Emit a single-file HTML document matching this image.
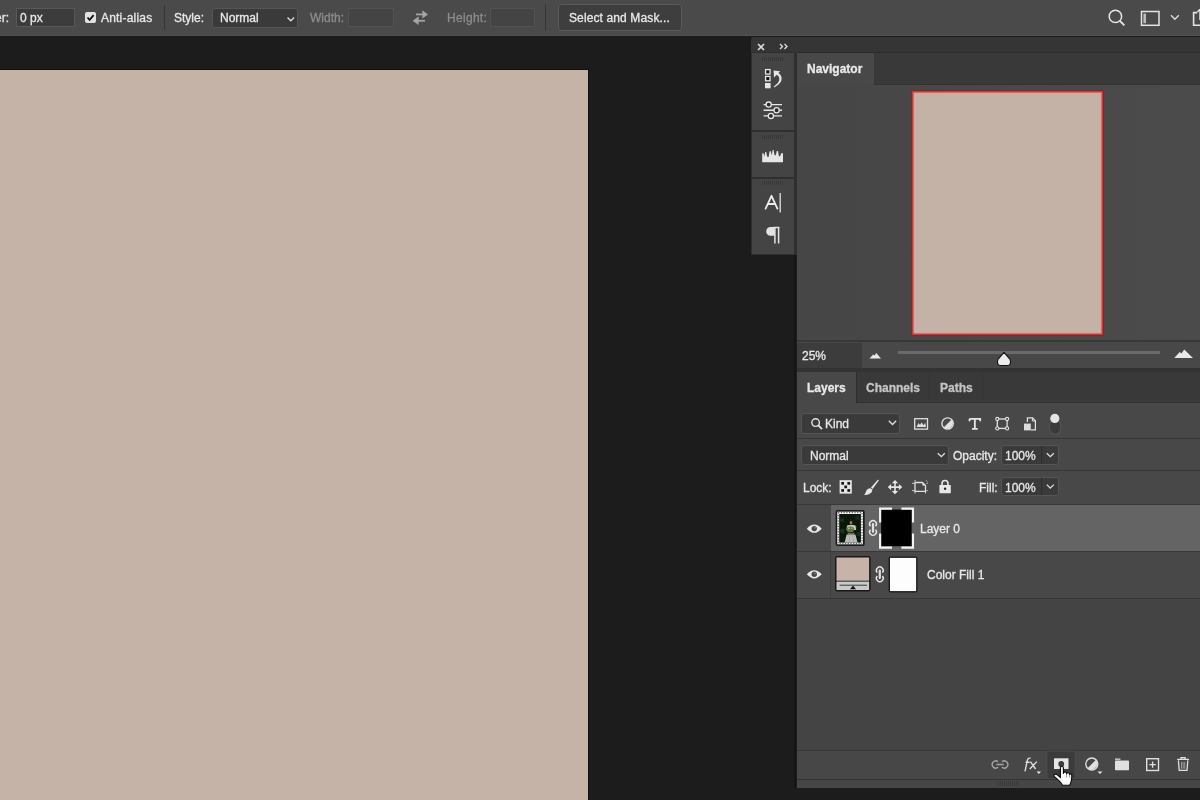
<!DOCTYPE html>
<html><head><meta charset="utf-8">
<style>
*{margin:0;padding:0;box-sizing:border-box}
html,body{width:1200px;height:800px;overflow:hidden;background:#1c1c1c;font-family:"Liberation Sans",sans-serif;color:#e8e8e8}
.a{position:absolute}
.t{position:absolute;font-size:12px;line-height:14px;white-space:nowrap;-webkit-text-stroke:0.3px currentColor;will-change:transform}
.b{font-weight:bold}
.dim{color:#8c8c8c}
.inp{position:absolute;background:#3c3c3c;border:1px solid #585858}
.dd{position:absolute;background:#3a3a3a;border:1px solid #555;border-radius:3px}
svg{position:absolute;overflow:visible}
</style></head><body>

<!-- TOOLBAR -->
<div class="a" style="left:0;top:0;width:1200px;height:36px;background:#4a4a4a;border-bottom:1px solid #505050"></div>
<div class="t" style="left:-5px;top:11px">er:</div>
<div class="inp" style="left:16px;top:8px;width:59px;height:19px"></div>
<div class="t" style="left:20px;top:11px">0 px</div>
<div class="a" style="left:85px;top:12px;width:11px;height:11px;background:#e2e2e2;border-radius:2px"></div>
<svg style="left:85px;top:12px" width="11" height="11"><path d="M2.5 5.5 L4.6 7.8 L8.6 3.2" stroke="#111" stroke-width="1.8" fill="none"/></svg>
<div class="t" style="left:101px;top:11px;letter-spacing:0.2px">Anti-alias</div>
<div class="a" style="left:164px;top:5px;width:1px;height:25px;background:#353535"></div>
<div class="t" style="left:174px;top:11px">Style:</div>
<div class="dd" style="left:212px;top:8px;width:86px;height:20px"></div>
<div class="t" style="left:220px;top:11px">Normal</div>
<svg style="left:287px;top:17px" width="8" height="5"><path d="M0.5 0.5 L3.8 3.8 L7.1 0.5" stroke="#ddd" stroke-width="1.3" fill="none"/></svg>
<div class="t dim" style="left:310px;top:11px">Width:</div>
<div class="inp" style="left:348px;top:8px;width:46px;height:19px;background:#444;border-color:#525252"></div>
<div class="t dim" style="left:447px;top:11px;letter-spacing:0.3px">Height:</div>
<div class="inp" style="left:490px;top:8px;width:45px;height:19px;background:#444;border-color:#525252"></div>
<div class="a" style="left:545px;top:4px;width:1px;height:27px;background:#353535"></div>
<div class="dd" style="left:558px;top:4px;width:124px;height:27px;background:#3e3e3e;border-color:#5a5a5a"></div>
<div class="t" style="left:569px;top:11px;letter-spacing:0.12px">Select and Mask...</div>

<!-- CANVAS DOC -->
<div class="a" style="left:-1px;top:69px;width:590px;height:740px;background:#101010"></div>
<div class="a" style="left:0;top:70px;width:588px;height:730px;background:#c5b3a7"></div>

<!-- PANEL HEADER -->
<div class="a" style="left:751px;top:37px;width:449px;height:16px;background:#353535;border-top-left-radius:3px"></div>
<svg style="left:757px;top:43px" width="8" height="8"><path d="M1 1 L7 7 M7 1 L1 7" stroke="#ddd" stroke-width="1.6"/></svg>
<svg style="left:779px;top:43px" width="10" height="7"><path d="M1 1 L3.5 3.5 L1 6 M5.5 1 L8 3.5 L5.5 6" stroke="#ddd" stroke-width="1.3" fill="none"/></svg>

<!-- TOOLBOX -->
<div class="a" style="left:751px;top:52px;width:46px;height:203px;background:#2f2f2f"></div>
<div class="a" style="left:752px;top:53px;width:42px;height:77px;background:#444"></div>
<div class="a" style="left:752px;top:132px;width:42px;height:45px;background:#444"></div>
<div class="a" style="left:752px;top:179px;width:42px;height:75px;background:#444"></div>

<!-- RIGHT PANEL -->
<div class="a" style="left:794px;top:255px;width:2px;height:533px;background:#151515"></div>
<div class="a" style="left:797px;top:52px;width:403px;height:736px;background:#484848"></div>
<div class="a" style="left:797px;top:85px;width:403px;height:255px;background:linear-gradient(90deg,#464646,#4b4b4b)"></div>
<!-- nav tab bar -->
<div class="a" style="left:797px;top:52px;width:403px;height:33px;background:#393939"></div>
<div class="a" style="left:797px;top:52px;width:403px;height:1px;background:#2c2c2c"></div>
<div class="a" style="left:874px;top:84px;width:326px;height:1px;background:#333"></div>
<div class="a" style="left:797px;top:53px;width:77px;height:32px;background:#484848"></div>
<div class="t b" style="left:807px;top:62px">Navigator</div>
<!-- thumbnail -->
<div class="a" style="left:911px;top:90px;width:193px;height:246px;background:#c4b2a6;border:1px solid #7a2a2a;box-shadow:inset 0 0 0 1.5px #c83a3a, inset 0 0 0 2.5px #dfa098"></div>
<!-- zoom bar -->
<div class="a" style="left:797px;top:340px;width:403px;height:2px;background:#383838"></div>
<div class="a" style="left:797px;top:343px;width:65px;height:25px;background:#3c3c3c"></div>
<div class="t" style="left:802px;top:349px">25%</div>
<div class="a" style="left:898px;top:351px;width:262px;height:3px;background:#6a6a6a"></div>
<div class="a" style="left:797px;top:368px;width:403px;height:4px;background:#333"></div>

<!-- layers tab bar -->
<div class="a" style="left:797px;top:372px;width:403px;height:31px;background:#393939"></div>
<div class="a" style="left:797px;top:372px;width:59px;height:31px;background:#484848"></div>
<div class="a" style="left:856px;top:372px;width:1px;height:31px;background:#2e2e2e"></div>
<div class="a" style="left:929px;top:372px;width:1px;height:30px;background:#343434"></div>
<div class="a" style="left:982px;top:372px;width:1px;height:30px;background:#343434"></div>
<div class="a" style="left:857px;top:402px;width:343px;height:1px;background:#333"></div>
<div class="t b" style="left:807px;top:381px">Layers</div>
<div class="t b" style="left:866px;top:381px;color:#c4c4c4">Channels</div>
<div class="t b" style="left:940px;top:381px;color:#c4c4c4">Paths</div>

<!-- kind row -->
<div class="dd" style="left:801px;top:413px;width:99px;height:21px"></div>
<div class="t" style="left:825px;top:417px">Kind</div>
<div class="a" style="left:797px;top:438px;width:403px;height:1px;background:#363636"></div>
<!-- blend row -->
<div class="dd" style="left:801px;top:445px;width:148px;height:20px"></div>
<div class="t" style="left:810px;top:449px">Normal</div>
<div class="t" style="left:953px;top:449px">Opacity:</div>
<div class="dd" style="left:1001px;top:445px;width:58px;height:20px"></div>
<div class="t" style="left:1005px;top:449px">100%</div>
<div class="a" style="left:797px;top:470px;width:403px;height:1px;background:#363636"></div>
<!-- lock row -->
<div class="t" style="left:803px;top:481px">Lock:</div>
<div class="t" style="left:979px;top:481px">Fill:</div>
<div class="dd" style="left:1001px;top:477px;width:58px;height:19px"></div>
<div class="t" style="left:1005px;top:481px">100%</div>

<!-- layers list -->
<div class="a" style="left:797px;top:504px;width:403px;height:1px;background:#383838"></div>
<div class="a" style="left:831px;top:505px;width:369px;height:46px;background:#646464"></div>
<div class="a" style="left:797px;top:551px;width:403px;height:1px;background:#383838"></div>
<div class="a" style="left:797px;top:598px;width:403px;height:1px;background:#383838"></div>
<div class="t" style="left:920px;top:522px">Layer 0</div>
<div class="t" style="left:927px;top:568px">Color Fill 1</div>

<!-- empty list -->
<div class="a" style="left:797px;top:599px;width:403px;height:151px;background:#444"></div>
<!-- bottom bar -->
<div class="a" style="left:797px;top:750px;width:403px;height:1px;background:#383838"></div>
<div class="a" style="left:797px;top:751px;width:403px;height:28px;background:#474747"></div>
<div class="a" style="left:797px;top:779px;width:403px;height:1px;background:#333"></div>
<div class="a" style="left:797px;top:780px;width:403px;height:8px;background:#464646"></div>


<!-- ICON OVERLAY (page coords) -->
<svg style="left:0;top:0" width="1200" height="800" viewBox="0 0 1200 800">
<g fill="none" stroke-linecap="butt">
 <!-- toolbox grips -->
 <g stroke="#383838" stroke-width="1">
  <path d="M762.5 57V61M764.5 57V61M766.5 57V61M768.5 57V61M770.5 57V61M772.5 57V61M774.5 57V61M776.5 57V61M778.5 57V61M780.5 57V61M782.5 57V61"/>
  <path d="M762.5 135V139M764.5 135V139M766.5 135V139M768.5 135V139M770.5 135V139M772.5 135V139M774.5 135V139M776.5 135V139M778.5 135V139M780.5 135V139M782.5 135V139"/>
  <path d="M762.5 181V185M764.5 181V185M766.5 181V185M768.5 181V185M770.5 181V185M772.5 181V185M774.5 181V185M776.5 181V185M778.5 181V185M780.5 181V185M782.5 181V185"/>
 </g>
 <!-- history icon -->
 <rect x="765.6" y="69.6" width="4.4" height="4.4" stroke="#e6e6e6" stroke-width="1.3" fill="#151515"/>
 <rect x="765.6" y="76.4" width="4.4" height="4.4" stroke="#e6e6e6" stroke-width="1.3" fill="#151515"/>
 <rect x="765" y="83" width="5.6" height="5.3" fill="#e6e6e6"/>
 <path d="M774.2 87.4 Q782 83.4 781.6 78 Q781.2 74.2 777.4 72.6 L776 74.6 Q779.2 75.8 779.4 78.4 Q779.4 82.6 773.8 86.4 Z" fill="#e6e6e6"/>
 <path d="M773.6 70.4 L780.2 71.2 L774 77.4 Z" fill="#e6e6e6"/>
 <!-- adjustments -->
 <g stroke="#e6e6e6" stroke-width="1.3">
  <path d="M763.6 104.6H782M763.6 110.25H782M763.6 115.9H782"/>
  <circle cx="768.7" cy="104.6" r="2.6" fill="#2a2a2a"/>
  <circle cx="776.6" cy="110.25" r="2.6" fill="#2a2a2a"/>
  <circle cx="770.9" cy="115.9" r="2.6" fill="#2a2a2a"/>
 </g>
 <!-- histogram -->
 <path d="M762.2 162.2 V153.6 L763.4 153 L764.4 156.5 L765.2 152 L766.2 152 L767.2 156.8 L768.6 157 L769.6 151.5 L770.8 151 L771.8 155.5 L772.6 150 L773.6 150 L774.6 155.5 L775.8 155 L776.8 151 L778 151 L779 156.5 L780.2 156 L781.2 153.2 L783 153.2 V162.2 Z" fill="#e6e6e6"/>
 <!-- A| -->
 <path d="M765.6 208.6 L771.5 195.8 L777.4 208.6 M767.8 204 H775.2" stroke="#ececec" stroke-width="1.8" stroke-linejoin="round" stroke-linecap="round"/>
 <path d="M780.2 193 V212.4" stroke="#d8d8d8" stroke-width="1.4"/>
 <!-- pilcrow -->
 <path d="M774.6 227 H770.5 A4.3 4.4 0 0 0 770.5 235.8 H774.6 Z" fill="#e4e4e4"/>
 <path d="M774.9 227 V243.5 M778.6 227 V243.5 M773.5 227.6 H779.5" stroke="#e4e4e4" stroke-width="1.5"/>

 <!-- nav zoom icons -->
 <path d="M869.5 358.6 L873.2 354.4 L874.6 355.4 L876.2 353 L881 358.6 Z" fill="#e8e8e8"/>
 <path d="M1174.2 358 L1179.8 352 L1181.4 353.6 L1184.2 349.6 L1193 358 Z" fill="#e8e8e8"/>
 <path d="M1004 352.4 L997.8 359.6 Q996.4 365.4 1000.6 365.5 H1007.4 Q1011.6 365.4 1010.2 359.6 Z" fill="#ececec" stroke="#111" stroke-width="1.1" stroke-linejoin="round"/>

 <!-- toolbar right icons -->
 <circle cx="1115.4" cy="16.4" r="6.2" stroke="#e8e8e8" stroke-width="1.5"/>
 <path d="M1119.8 20.8 L1124.4 25.4" stroke="#e8e8e8" stroke-width="1.8"/>
 <rect x="1141.5" y="11.5" width="17.5" height="13.8" stroke="#e4e4e4" stroke-width="1.5"/>
 <rect x="1143.4" y="13.6" width="2.6" height="9.6" fill="#bdbdbd"/>
 <path d="M1171 15.3 L1174.9 19.3 L1178.8 15.3" stroke="#e0e0e0" stroke-width="1.3"/>
 <path d="M1197.2 12.6 H1193.6 V25.2 H1201" stroke="#e4e4e4" stroke-width="1.6"/><path d="M1200 9.2 L1197.4 12 M1200 9.2 L1202.6 12 M1200 9.6 V20" stroke="#e4e4e4" stroke-width="1.5"/>
 <!-- swap arrows -->
 <path d="M416 14.4 H424" stroke="#a4a4a4" stroke-width="1.8"/><path d="M422.4 10.2 L428 14.4 L422.4 18.6 Z" fill="#a4a4a4"/>
 <path d="M425 20.8 H417" stroke="#a4a4a4" stroke-width="1.8"/><path d="M418.6 16.6 L412.6 20.8 L418.6 25 Z" fill="#a4a4a4"/>

 <!-- kind row -->
 <circle cx="815.6" cy="422.6" r="3.8" stroke="#e6e6e6" stroke-width="1.4"/>
 <path d="M818.4 425.4 L822 429.2" stroke="#e6e6e6" stroke-width="1.8"/>
 <path d="M888.8 420.8 L892.5 424.5 L896.2 420.8" stroke="#e0e0e0" stroke-width="1.3"/>
 <rect x="914.7" y="418.7" width="12.8" height="10.4" stroke="#e0e0e0" stroke-width="1.3"/>
 <path d="M916.5 427 L918.6 423 L920 425 L921.6 422.6 L923.6 425.2 L925.2 422.8 L926 427 Z" fill="#e0e0e0"/>
 <circle cx="947.6" cy="423.5" r="5.7" stroke="#e0e0e0" stroke-width="1.3"/>
 <path d="M951.6 419.5 A5.7 5.7 0 0 1 943.6 427.5 Z" fill="#e0e0e0"/>
 <path d="M969.5 418.8 H980.2 V421.2 M969.5 418.8 V421.2 M974.85 418.8 V428.6 M972 428.8 H977.7" stroke="#e6e6e6" stroke-width="1.8"/>
 <rect x="997.3" y="419" width="9.8" height="9.4" stroke="#e0e0e0" stroke-width="1.3"/>
 <g fill="#484848" stroke="#e6e6e6" stroke-width="1.1"><circle cx="997.3" cy="419" r="1.6"/><circle cx="1007.1" cy="419" r="1.6"/><circle cx="997.3" cy="428.4" r="1.6"/><circle cx="1007.1" cy="428.4" r="1.6"/></g>
 <path d="M1027.4 422 V417.8 H1032.6 L1035.4 420.8 V429.8 H1031" stroke="#e0e0e0" stroke-width="1.2"/>
 <path d="M1032.4 417.8 V421 H1035.4" stroke="#e0e0e0" stroke-width="1"/>
 <rect x="1024" y="423.6" width="6.8" height="6.8" fill="#dcdcdc"/>
 <rect x="1049.6" y="419.8" width="11" height="14.4" rx="5.5" fill="#3a3a3a" stroke="#585858" stroke-width="1"/>
 <circle cx="1054.8" cy="418.4" r="4.6" fill="#e4e4e4"/>

 <!-- blend/opacity chevrons -->
 <path d="M937.8 453.2 L941.3 456.7 L944.8 453.2" stroke="#e0e0e0" stroke-width="1.3"/>
 <path d="M1046.8 453.2 L1050.3 456.7 L1053.8 453.2" stroke="#e0e0e0" stroke-width="1.3"/>
 <path d="M1046.8 484.6 L1050.3 488.1 L1053.8 484.6" stroke="#e0e0e0" stroke-width="1.3"/>
 <path d="M1041.6 446 V464 M1041.6 477.5 V495" stroke="#2e2e2e" stroke-width="1"/>

 <!-- lock icons -->
 <rect x="839.6" y="480.2" width="12.2" height="13.4" fill="#e6e6e6"/>
 <g fill="#151515"><rect x="841.3" y="482" width="2.7" height="2.7"/><rect x="847.4" y="482" width="2.7" height="2.7"/><rect x="844.35" y="485.55" width="2.7" height="2.7"/><rect x="841.3" y="489.1" width="2.7" height="2.7"/><rect x="847.4" y="489.1" width="2.7" height="2.7"/></g>
 <path d="M871 487.6 L877.6 480 Q879 479.2 878.6 480.8 L872.6 489 Z" fill="#e6e6e6"/>
 <path d="M870.4 488.2 Q866.8 488.6 866 491.4 Q865.4 494 863.8 494.8 Q869 495.4 871.4 492.6 Q872.6 491 872.2 489.4 Z" fill="#e6e6e6"/>
 <g fill="#e6e6e6"><path d="M895 480 L898.2 483.3 H891.8 Z M895 494.3 L898.2 491 H891.8 Z M887.8 487.1 L891.1 483.9 V490.3 Z M902.2 487.1 L898.9 483.9 V490.3 Z"/></g>
 <path d="M895 482.5 V491.8 M890 487.1 H900" stroke="#e6e6e6" stroke-width="1.6"/>
 <path d="M915 482 V491.3 H925.5 V485.6 L922.4 482.5 H915" stroke="#e0e0e0" stroke-width="1.3"/>
 <path d="M922.4 482.5 V485.6 H925.5 Z" fill="#e0e0e0"/>
 <path d="M912.2 483.3 H914.6 M915 480 V481.6 M926.3 480.6 L927.4 481.6 M927.8 483.3 H926.5 M912.2 490.6 H914.6 M915 492 V493.4 M925.5 492 V493.4 M927.8 490.6 H926.5" stroke="#d8d8d8" stroke-width="1"/>
 <path d="M942 485.4 V483.6 A3 3.1 0 0 1 948 483.6 V485.4" stroke="#e6e6e6" stroke-width="1.6"/>
 <rect x="939.4" y="485" width="11.4" height="8.3" rx="0.6" fill="#e6e6e6"/>
 <circle cx="945.1" cy="488.8" r="1.2" fill="#222"/>

 <!-- eyes -->
 <path d="M806.8 528.7 Q814.25 520.4 821.7 528.7 Q814.25 537 806.8 528.7 Z" fill="#e8e8e8"/>
 <circle cx="814.25" cy="528.6" r="2.7" fill="#4a4a4a"/><circle cx="815" cy="527.8" r="0.8" fill="#888"/>
 <path d="M806.8 574.3 Q814.25 566 821.7 574.3 Q814.25 582.6 806.8 574.3 Z" fill="#e8e8e8"/>
 <circle cx="814.25" cy="574.2" r="2.7" fill="#4a4a4a"/><circle cx="815" cy="573.4" r="0.8" fill="#888"/>
</g>
</svg>

<!-- LAYER ROWS & BOTTOM ICONS -->
<svg style="left:0;top:0" width="1200" height="800" viewBox="0 0 1200 800">
 <!-- eye column separators -->
 <path d="M830.5 552 V598" stroke="#3e3e3e" stroke-width="1"/>
 <!-- Layer 0 thumb -->
 <rect x="835.6" y="510.1" width="29.1" height="35.8" rx="2" fill="#1a1a1a"/>
 <rect x="837.2" y="511.7" width="25.8" height="32.6" fill="#f4f4f4"/>
 <path d="M838.2 512.7 h23.8 v30.6 h-23.8 Z" fill="none" stroke="#2a2a2a" stroke-width="0.9" stroke-dasharray="1.2 1.5"/>
 <rect x="839.2" y="514" width="21.7" height="28.6" fill="#0a170b"/>
 <g>
  <circle cx="842" cy="520" r="2.2" fill="#16301a"/>
  <circle cx="857.5" cy="518" r="2.4" fill="#142c16"/>
  <circle cx="842.5" cy="531" r="2.4" fill="#18341a"/>
  <circle cx="858.5" cy="534" r="2.2" fill="#163018"/>
  <circle cx="855.5" cy="527" r="1.6" fill="#1c3a1e"/>
  <path d="M849 520.8 Q850.6 517.6 852.6 519.8 L852.4 522.2 Q850.6 520.8 849.2 522.6 Z" fill="#1e1410"/>
  <ellipse cx="851" cy="522.6" rx="1.3" ry="1.7" fill="#9c7f70"/>
  <path d="M847 525.5 Q851 523.8 855.5 525.5 L856.2 530 L846.4 530 Z" fill="#c4c8b2"/>
  <ellipse cx="850.4" cy="529.4" rx="3.8" ry="3" fill="#5a7548"/>
  <circle cx="848.8" cy="528.4" r="0.9" fill="#b4c0a0"/>
  <circle cx="851.8" cy="528.2" r="0.8" fill="#a4b890"/>
  <path d="M847.5 532.6 Q851 534.4 854.5 532.4 L854 534 Q851 535.4 848 534 Z" fill="#a08474"/>
  <path d="M846.6 534.4 L855.4 534.4 L857.6 542.6 L844.6 542.6 Z" fill="#b9bcb8"/>
  <path d="M849 534.6 L850 542.6 M852.6 534.6 L853.8 542.6" stroke="#9ea09c" stroke-width="0.6"/>
 </g>
 <!-- chain 1 -->
 <g fill="none" stroke="#e8e8e8" stroke-width="1.4">
  <path d="M870.4 526.2 A3.4 3.4 0 1 1 875.6 526.2"/>
  <path d="M870.4 529.6 A3.4 3.4 0 1 0 875.6 529.6"/>
 </g>
 <rect x="871.9" y="523" width="2.2" height="9.8" rx="1.1" fill="#e0e0e0"/>
 <!-- mask 1 -->
 <rect x="881.2" y="509.6" width="30.4" height="36.6" fill="#000"/>
 <g fill="none" stroke="#f2f2f2" stroke-width="2.1">
  <path d="M880.1 522.5 V508.6 H892"/>
  <path d="M901.4 508.6 H913 V522.5"/>
  <path d="M880.1 533.6 V547.6 H892"/>
  <path d="M901.4 547.6 H913 V533.6"/>
 </g>
 <!-- Color fill thumb -->
 <rect x="835" y="556.1" width="35.6" height="35.3" rx="2.2" fill="#181818"/>
 <rect x="836.5" y="557.5" width="32.6" height="23.2" fill="#c7b3a7"/>
 <rect x="836.5" y="581.6" width="32.6" height="8.4" fill="#c9c9c9"/>
 <path d="M839.6 585.2 H867" stroke="#2a2a2a" stroke-width="0.9"/>
 <path d="M850 589.2 L853 585.6 L856 589.2 Z" fill="#111"/>
 <!-- chain 2 -->
 <g fill="none" stroke="#e8e8e8" stroke-width="1.4">
  <path d="M877.2 572.6 A3.4 3.4 0 1 1 882.4 572.6"/>
  <path d="M877.2 576 A3.4 3.4 0 1 0 882.4 576"/>
 </g>
 <rect x="878.7" y="569.4" width="2.2" height="9.8" rx="1.1" fill="#e0e0e0"/>
 <!-- white mask -->
 <rect x="888.6" y="556.5" width="28.9" height="36" rx="2.2" fill="#1a1a1a"/>
 <rect x="890" y="557.9" width="26.1" height="33.2" fill="#fdfdfd"/>

 <!-- bottom icons -->
 <g fill="none" stroke="#a6a6a6" stroke-width="1.3">
  <path d="M998.1 761.7 A3.6 3.6 0 1 0 998.1 767.3"/>
  <path d="M1001.9 761.7 A3.6 3.6 0 1 1 1001.9 767.3"/>
  <path d="M996.4 764.5 H1003.6" stroke-width="1.5"/>
 </g>
 <path d="M1025 771.4 L1027.4 760 Q1028.2 757.6 1030.6 758.2 M1025.6 762.2 H1029.6 M1030.4 761.6 L1035.6 769 M1036.8 761.6 L1029.8 769" fill="none" stroke="#e0e0e0" stroke-width="1.35"/>
 <path d="M1036.6 771.6 H1041 L1038.8 774 Z" fill="#e8e8e8"/>
 <rect x="1047" y="751.2" width="28" height="27.3" fill="#3b3b3b" stroke="#4a4a4a" stroke-width="1"/>
 <rect x="1054" y="758.3" width="14.5" height="10.7" fill="#e4e4e4"/>
 <circle cx="1061.2" cy="764" r="2.9" fill="#3a3a3a"/>
 <path d="M1085.8 764 A6 6 0 1 0 1097.8 764 A6 6 0 1 0 1085.8 764 Z" fill="none" stroke="#e0e0e0" stroke-width="1.3"/>
 <path d="M1096 759.8 A6 6 0 0 1 1087.6 768.2 Z" fill="#e0e0e0"/>
 <path d="M1097.6 771.4 H1102.4 L1100 774 Z" fill="#e8e8e8"/>
 <path d="M1115 760 H1120.4 V758.4 H1115 Z" fill="#bdbdbd"/>
 <rect x="1115" y="760.4" width="14" height="9.8" rx="0.8" fill="#e0e0e0"/>
 <rect x="1146.7" y="758.7" width="11.8" height="11.8" fill="none" stroke="#e0e0e0" stroke-width="1.4"/>
 <path d="M1152.6 761.4 V767.8 M1149.4 764.6 H1155.8" stroke="#e0e0e0" stroke-width="1.4"/>
 <path d="M1177.2 759.4 H1189 M1181 759 V757.6 H1185.2 V759" fill="none" stroke="#e0e0e0" stroke-width="1.3"/>
 <path d="M1178.4 760.4 L1179.2 770.4 H1187 L1187.8 760.4" fill="none" stroke="#e0e0e0" stroke-width="1.3"/>
 <path d="M1181.5 762 V768.8 M1183.1 762 V768.8 M1184.7 762 V768.8" stroke="#9a9a9a" stroke-width="1"/>
 <!-- hand cursor -->
 <path d="M1060.4 776.2 V768 Q1060.4 766.3 1061.9 766.3 Q1063.4 766.3 1063.4 768 V773.4 Q1063.6 771.8 1065.2 771.9 Q1066.6 772 1066.6 773.8 Q1067 772.6 1068.3 772.8 Q1069.6 773 1069.6 774.6 Q1070 773.8 1071 774.1 Q1072 774.4 1071.8 776.4 L1071.4 780.6 Q1070.6 783.4 1069.6 785.2 H1062.6 Q1060.6 782 1057.8 779.6 L1054.4 776.6 Q1053.2 775.2 1054.6 774.4 Q1056.2 773.8 1058 775.4 L1060.4 777.6 Z" fill="#fafafa" stroke="#0a0a0a" stroke-width="1.1" stroke-linejoin="round"/>
 <path d="M1066.6 774 V777.4 M1069.6 774.8 V777.6" stroke="#555" stroke-width="0.6"/>
 <!-- bottom grip -->
 <path d="M998.5 781V786M1000.5 781V786M1002.5 781V786M1004.5 781V786M1006.5 781V786M1008.5 781V786M1010.5 781V786M1012.5 781V786M1014.5 781V786M1016.5 781V786M1018.5 781V786" stroke="#3a3a3a" stroke-width="1"/>
</svg>
</body></html>
